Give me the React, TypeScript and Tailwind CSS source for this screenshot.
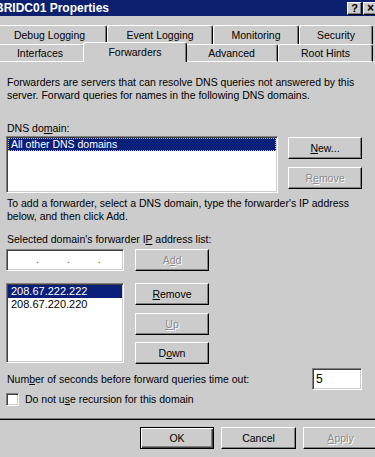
import React from "react";

const raised =
  "bg-[#cccccc] border border-t-white border-l-white border-r-black border-b-black shadow-[inset_-1px_-1px_0_#808080]";
const sunken =
  "bg-white border border-t-[#808080] border-l-[#808080] border-r-white border-b-white shadow-[inset_1px_1px_0_#404040,inset_-1px_-1px_0_#cccccc]";
const dim = "text-[#8c8c8c] [text-shadow:1px_1px_0_#ffffff]";

function Btn({
  children,
  disabled,
  def,
  className = "",
}: {
  children: React.ReactNode;
  disabled?: boolean;
  def?: boolean;
  className?: string;
}) {
  const frame = def
    ? "bg-[#cccccc] border border-black shadow-[inset_1px_1px_0_#ffffff,inset_-1px_-1px_0_#404040,inset_-2px_-2px_0_#808080]"
    : raised;
  return (
    <div className={`${frame} ${className} flex items-center justify-center h-[22px] ${disabled ? dim : "text-black"}`}>
      <span>{children}</span>
    </div>
  );
}

function Tab({ label, w, selected, row1 }: { label: string; w: number; selected?: boolean; row1?: boolean }) {
  const base =
    "shrink-0 flex items-center justify-center bg-[#cccccc] border-t border-l border-t-white border-l-white border-r border-r-black shadow-[inset_-1px_0_0_#808080] rounded-t-[3px]";
  if (selected)
    return (
      <div className={`${base} relative z-10 -mx-[2px] h-[20px]`} style={{ width: w }}>
        {label}
      </div>
    );
  return (
    <div
      className={`${base} ${row1 ? "h-[19px]" : "h-[18px] border-b border-b-white"}`}
      style={{ width: w }}
    >
      {label}
    </div>
  );
}

export default function App() {
  return (
    <div className="w-[375px] h-[457px] overflow-hidden bg-[#cccccc] text-[10.5px] leading-[13px] text-black font-['Liberation_Sans',Arial,sans-serif]">
      {/* title bar */}
      <div className="h-[16px] bg-[#0b2170] flex items-center justify-between">
        <span className="-ml-[5px] text-white font-bold text-[12px] leading-[16px]">BRIDC01 Properties</span>
        <div className="flex gap-[1px] -mr-[3px]">
          <div className={`${raised} w-[15px] h-[13px] flex items-center justify-center font-bold text-[11px] leading-none`}>?</div>
          <div className={`${raised} w-[15px] h-[13px] flex items-center justify-center font-bold text-[12px] leading-none`}>×</div>
        </div>
      </div>

      {/* tabs */}
      <div className="mt-[9px] flex -ml-[8px]">
        <Tab row1 label="Debug Logging" w={115} />
        <Tab row1 label="Event Logging" w={106} />
        <Tab row1 label="Monitoring" w={86} />
        <Tab row1 label="Security" w={74} />
      </div>
      <div className="-mt-[2px] h-[20px] flex items-end -ml-[5px]">
        <Tab label="Interfaces" w={90} />
        <Tab label="Forwarders" w={104} selected />
        <Tab label="Advanced" w={93} />
        <Tab label="Root Hints" w={95} />
        <div className="flex-1 h-[1px] bg-white" />
      </div>

      {/* panel */}
      <div className="pl-[6px] pt-[14px] pb-[13px] border-b border-b-black shadow-[inset_0_-1px_0_#808080] w-[420px]">
        <div className="w-[356px]">
          <p className="pl-[1px]">
            Forwarders are servers that can resolve DNS queries not answered by this server. Forward queries for names in
            the following DNS domains.
          </p>
          <div className="mt-[20px] pl-[1px]">
            DNS do<u>m</u>ain:
          </div>
          <div className="mt-[1px] flex justify-between">
            <div className={`${sunken} w-[272px] h-[57px] p-[1px]`}>
              <div className="bg-[#0a1f7a] text-white h-[13px] border border-dotted border-[#c8c080] pl-[2px] leading-[11px]">
                All other DNS domains
              </div>
            </div>
            <div className="w-[74px] flex flex-col">
              <Btn className="mt-[1px]">
                <u>N</u>ew...
              </Btn>
              <Btn disabled className="mt-[8px]">
                R<u>e</u>move
              </Btn>
            </div>
          </div>
          <p className="mt-[4px] pl-[1px]">
            To add a forwarder, select a DNS domain, type the forwarder's IP address below, and then click Add.
          </p>
          <div className="mt-[10px] pl-[1px]">
            Selected domain's forwarder I<u>P</u> address list:
          </div>
          <div className="mt-[3px] flex gap-[11px]">
            <div className={`${sunken} w-[118px] h-[22px] flex items-end pb-[4px] pl-[29px] gap-[28px] text-[#404040]`}>
              <span>.</span>
              <span>.</span>
              <span>.</span>
            </div>
            <Btn disabled className="w-[74px]">
              A<u>d</u>d
            </Btn>
          </div>
          <div className="mt-[12px] flex gap-[11px]">
            <div className={`${sunken} w-[118px] h-[80px] p-[1px] text-[11px] leading-[13px]`}>
              <div className="bg-[#0a1f7a] text-white pl-[3px]">208.67.222.222</div>
              <div className="pl-[3px]">208.67.220.220</div>
            </div>
            <div className="w-[74px] flex flex-col">
              <Btn>
                <u>R</u>emove
              </Btn>
              <Btn disabled className="mt-[8px]">
                <u>U</u>p
              </Btn>
              <Btn className="mt-[7px]">
                D<u>o</u>wn
              </Btn>
            </div>
          </div>
          <div className="mt-[4px] flex items-center justify-between">
            <span className="pl-[1px]">
              Num<u>b</u>er of seconds before forward queries time out:
            </span>
            <div className={`${sunken} w-[50px] h-[22px] flex items-center pl-[3px] text-[12px]`}>5</div>
          </div>
          <div className="mt-[3px] flex items-center gap-[6px]">
            <div className={`${sunken} w-[13px] h-[13px]`} />
            <span>
              Do not u<u>s</u>e recursion for this domain
            </span>
          </div>
        </div>
      </div>

      {/* dialog buttons */}
      <div className="mt-[7px] pl-[140px] flex gap-[7px]">
        <Btn def className="w-[74px] shrink-0">
          OK
        </Btn>
        <Btn className="w-[75px] shrink-0">Cancel</Btn>
        <Btn disabled className="w-[75px] shrink-0">
          <u>A</u>pply
        </Btn>
      </div>
    </div>
  );
}
